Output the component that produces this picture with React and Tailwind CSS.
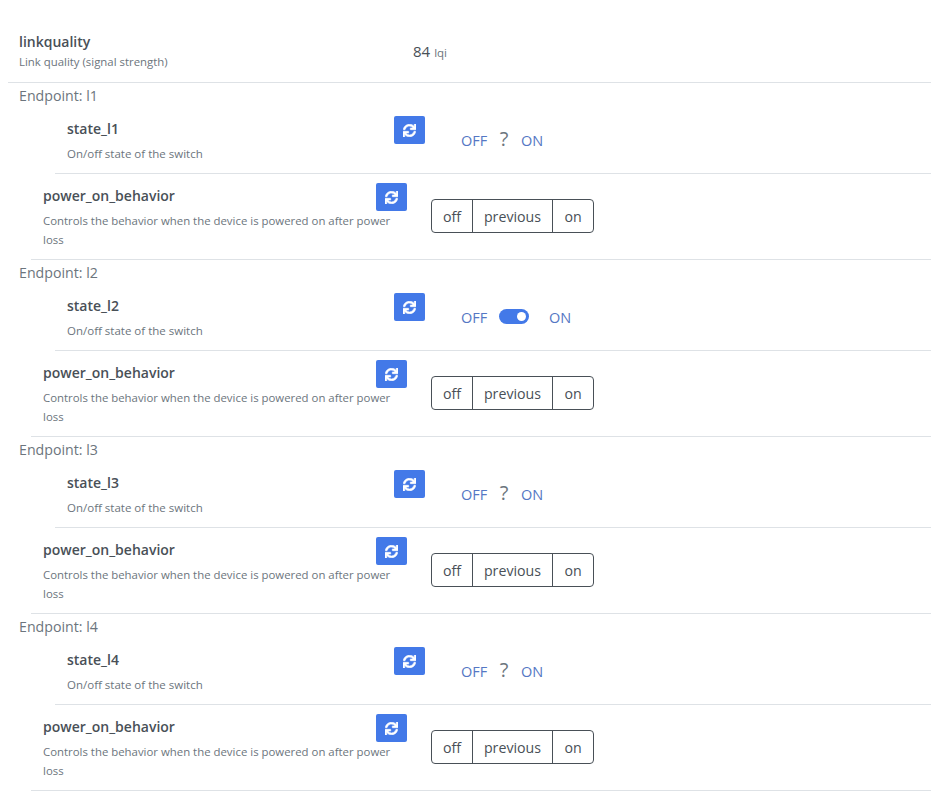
import React from "react";
import { FaSync } from "react-icons/fa";

function RefreshBtn() {
  return (
    <button className="w-[31px] h-[28px] bg-[#4379e8] rounded-[2px] flex items-center justify-center text-white shrink-0">
      <FaSync className="w-[13px] h-[13px] stroke-[24]" />
    </button>
  );
}

function StateRow({ name, value }) {
  return (
    <div className="ml-[55px] h-[66px] border-b border-[#dee2e6] flex pt-2 pl-3">
      <div className="w-[358px] shrink-0">
        <div className="flex items-start justify-between">
          <div className="text-[14px] font-[550] text-[#495057] leading-[26px]">{name}</div>
          <RefreshBtn />
        </div>
        <div className="text-[11.5px] text-[#6c757d] leading-[18px] mt-[1px]">On/off state of the switch</div>
      </div>
      <div className="ml-[36px] mt-[15px] flex items-center h-[20px] text-[14.5px] text-[#5577c4]">
        <span className="w-[26px]">OFF</span>
        {value === "on" ? (
          <>
            <span className="ml-[12px] -mt-[3px] w-[30px] h-[15px] rounded-full bg-[#4379e8] flex items-center justify-end pr-[3px]">
              <span className="w-[9px] h-[9px] rounded-full bg-white" />
            </span>
            <span className="ml-[20px]">ON</span>
          </>
        ) : (
          <>
            <span className="ml-[11px] w-[12px] text-[20px] font-medium text-[#6c757d] leading-none -mt-[5px] text-center">?</span>
            <span className="ml-[11px]">ON</span>
          </>
        )}
      </div>
    </div>
  );
}

function PowerRow() {
  return (
    <div className="ml-[31px] h-[86px] border-b border-[#dee2e6] flex pt-[9px] pl-3">
      <div className="w-[364px] shrink-0">
        <div className="flex items-start justify-between">
          <div className="text-[14px] font-[550] text-[#495057] leading-[26px]">power_on_behavior</div>
          <RefreshBtn />
        </div>
        <div className="text-[11.4px] text-[#6c757d] leading-[19px]">
          Controls the behavior when the device is powered on after power loss
        </div>
      </div>
      <div className="ml-[24px] mt-[16px] h-[34px] flex border border-[#495057] rounded-[4px] text-[14.2px] text-[#495057] leading-[33px]">
        <span className="w-[40px] text-center">off</span>
        <span className="w-[80px] text-center border-l border-[#495057]">previous</span>
        <span className="w-[41px] text-center border-l border-[#495057]">on</span>
      </div>
    </div>
  );
}

function Endpoint({ id, value }) {
  return (
    <div>
      <div className="pl-[19px] h-[25px] text-[14.2px] leading-[26px] text-[#6c757d]">Endpoint: {id}</div>
      <StateRow name={`state_${id}`} value={value} />
      <PowerRow />
    </div>
  );
}

export default function App() {
  return (
    <div className="w-[931px] h-[810px] bg-white overflow-hidden font-['Open_Sans',sans-serif]">
      <div className="ml-[8px] h-[83px] border-b border-[#dee2e6] flex pt-[29px] pl-[11px]">
        <div className="w-[394px] shrink-0">
          <div className="text-[14px] font-[550] text-[#495057] leading-[26px]">linkquality</div>
          <div className="text-[11.4px] text-[#6c757d] leading-[18px] -mt-[2px]">Link quality (signal strength)</div>
        </div>
        <div className="mt-[11px] flex items-baseline h-[26px]">
          <span className="text-[15px] font-medium text-[#495057]">84</span>
          <span className="text-[11.5px] text-[#6c757d] ml-[4px]">lqi</span>
        </div>
      </div>
      <Endpoint id="l1" value="unknown" />
      <Endpoint id="l2" value="on" />
      <Endpoint id="l3" value="unknown" />
      <Endpoint id="l4" value="unknown" />
    </div>
  );
}
